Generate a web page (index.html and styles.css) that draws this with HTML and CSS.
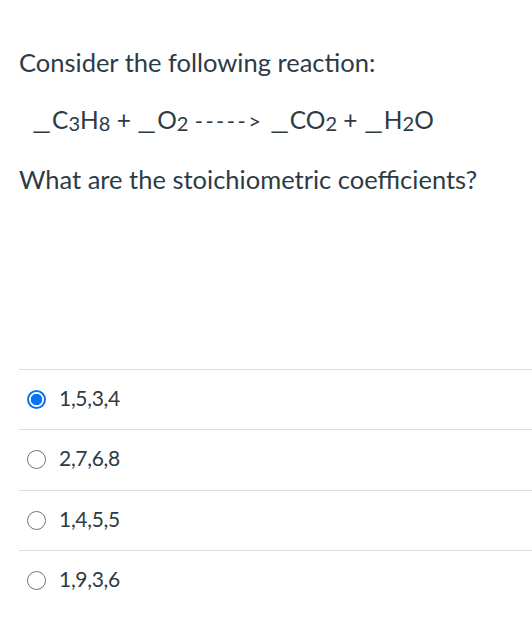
FILE: index.html
```html
<!DOCTYPE html>
<html>
<head>
<meta charset="utf-8">
<link rel="stylesheet" href="styles.css">
</head>
<body>
<div class="quiz">
  <div class="question">
    <p class="q-line">Consider the following reaction:</p>
    <p class="eq"><span class="u">_</span>C<sub>3</sub>H<sub>8</sub> + <span class="u">_</span>O<sub>2</sub> <span class="arrow">-----&gt;</span> <span class="u">_</span>CO<sub>2</sub> + <span class="u">_</span>H<sub>2</sub>O</p>
    <p class="q-line">What are the stoichiometric coefficients?</p>
  </div>
  <ul class="answers">
    <li class="answer"><span class="radio checked"></span><span class="label">1,5,3,4</span></li>
    <li class="answer"><span class="radio"></span><span class="label">2,7,6,8</span></li>
    <li class="answer"><span class="radio"></span><span class="label">1,4,5,5</span></li>
    <li class="answer"><span class="radio"></span><span class="label">1,9,3,6</span></li>
  </ul>
</div>
</body>
</html>
```
FILE: styles.css
```css
html, body {
  margin: 0;
  padding: 0;
  background: #ffffff;
}
body {
  font-family: Lato, "Open Sans", sans-serif;
  color: #2d3b45;
}
.quiz {
  padding: 40px 0 0 19px;
}
.question p {
  margin: 0;
}
.q-line {
  font-size: 25.5px;
  line-height: 44px;
}
.eq {
  font-size: 24.5px;
  line-height: 44px;
  padding-left: 13px;
  margin: 14px 0 !important;
}
.eq .u {
  display: inline-block;
  width: 20px;
  transform: scaleX(1.7);
  transform-origin: left center;
}
.eq .arrow {
  letter-spacing: 2.5px;
  font-size: 0.9em;
}
.eq sub {
  font-size: 0.82em;
  vertical-align: -0.12em;
  line-height: 0;
}
.answers {
  list-style: none;
  margin: 168px 0 0 0;
  padding: 0;
}
.answer {
  display: flex;
  align-items: center;
  height: 59.33px;
  border-top: 1px solid #dadcde;
  gap: 13px;
  padding-left: 8px;
}
.radio {
  box-sizing: border-box;
  width: 19px;
  height: 19px;
  border-radius: 50%;
  border: 1.5px solid #6b7780;
  background: #fff;
  flex: none;
}
.radio.checked {
  border: 2px solid #0b74f1;
  background: radial-gradient(circle, #0b74f1 0 5.5px, #fff 6px);
}
.label {
  font-size: 21px;
  line-height: 24px;
  letter-spacing: -0.3px;
  padding-bottom: 3px;
}
```
